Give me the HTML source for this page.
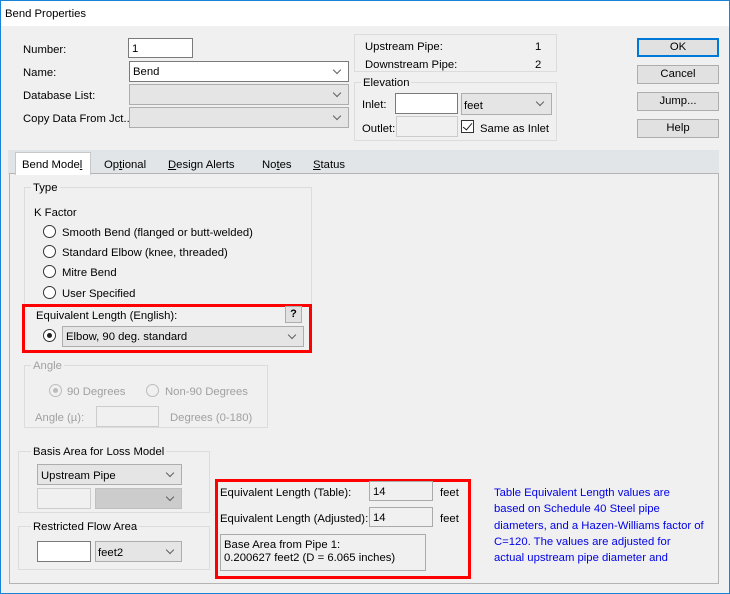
<!DOCTYPE html><html><head><style>
*{box-sizing:border-box}
body{margin:0;width:730px;height:594px;overflow:hidden;font-family:"Liberation Sans",sans-serif;font-size:11.3px;color:#000;background:#f0f0f0;position:relative}
.a{position:absolute;white-space:nowrap}
.t{position:absolute;white-space:nowrap;line-height:14px;margin-top:1px}
.in{position:absolute;background:#fff;border:1px solid #7a7a7a}
.dis{position:absolute;background:#f0f0f0;border:1px solid #ccc}
.cb{position:absolute;background:#e5e5e5;border:1px solid #adadad}
.cbw{position:absolute;background:#fff;border:1px solid #7a7a7a}
.ch::after{content:"";position:absolute;right:8px;top:5px;width:5px;height:5px;border-right:1px solid #606060;border-bottom:1px solid #606060;transform:rotate(45deg)}
.grp{position:absolute;border:1px solid #dcdcdc}
.lg{position:absolute;background:#f0f0f0;padding:0 2px;line-height:14px}
.btn{position:absolute;background:#e1e1e1;border:1px solid #adadad;text-align:center;line-height:16px}
.rd{position:absolute;width:13px;height:13px;border:1px solid #333;border-radius:50%;background:#fff}
.gray{color:#a0a0a0}
</style></head><body>
<div class="a" style="left:0;top:0;width:730px;height:594px;border:1px solid #1883d7;border-top:none"></div>
<div class="a" style="left:1px;top:0;width:728px;height:26px;background:#fff"></div>
<div class="a" style="left:0;top:0;width:730px;height:1px;background:#1883d7"></div>
<div class="t" style="left:5px;top:6px">Bend Properties</div>

<div class="t" style="left:23px;top:42px">Number:</div>
<div class="in" style="left:128px;top:38px;width:65px;height:20px"></div><div class="t" style="left:132px;top:41px">1</div>
<div class="t" style="left:23px;top:65px">Name:</div>
<div class="cbw ch" style="left:129px;top:61px;width:220px;height:21px"></div><div class="t" style="left:133px;top:64px">Bend</div>
<div class="t" style="left:23px;top:88px">Database List:</div>
<div class="cb ch" style="left:129px;top:84px;width:220px;height:21px"></div>
<div class="t" style="left:23px;top:111px">Copy Data From Jct...</div>
<div class="cb ch" style="left:129px;top:107px;width:220px;height:21px"></div>

<div class="grp" style="left:354px;top:34px;width:203px;height:38px"></div>
<div class="t" style="left:365px;top:39px">Upstream Pipe:</div><div class="t" style="left:535px;top:39px">1</div>
<div class="t" style="left:365px;top:57px">Downstream Pipe:</div><div class="t" style="left:535px;top:57px">2</div>
<div class="grp" style="left:354px;top:82px;width:203px;height:59px"></div>
<div class="lg" style="left:361px;top:76px">Elevation</div>
<div class="t" style="left:362px;top:97px">Inlet:</div>
<div class="in" style="left:395px;top:93px;width:63px;height:21px"></div>
<div class="cb ch" style="left:461px;top:93px;width:91px;height:22px"></div><div class="t" style="left:464px;top:98px">feet</div>
<div class="t" style="left:362px;top:121px">Outlet:</div>
<div class="dis" style="left:396px;top:116px;width:62px;height:21px;background:#f0f0f0"></div>
<div class="a" style="left:461px;top:120px;width:13px;height:13px;border:1px solid #333;background:#fff"></div>
<div class="a" style="left:465px;top:121px;width:5px;height:9px;border-right:1px solid #222;border-bottom:1px solid #222;transform:rotate(40deg)"></div>
<div class="t" style="left:480px;top:121px">Same as Inlet</div>

<div class="btn" style="left:637px;top:38px;width:82px;height:19px;border:2px solid #0078d7;line-height:15px">OK</div>
<div class="btn" style="left:637px;top:65px;width:82px;height:19px">Cancel</div>
<div class="btn" style="left:637px;top:92px;width:82px;height:19px">Jump...</div>
<div class="btn" style="left:637px;top:119px;width:82px;height:19px">Help</div>

<div class="a" style="left:8px;top:150px;width:711px;height:24px;background:#e1e5e8"></div>
<div class="a" style="left:9px;top:173px;width:710px;height:411px;border:1px solid #b4b4b4;background:#f0f0f0"></div>
<div class="a" style="left:15px;top:152px;width:76px;height:23px;background:#fff;border:1px solid #c8c8c8;border-bottom:none"></div>
<div class="t" style="left:22px;top:157px">Bend Mode<u>l</u></div>
<div class="t" style="left:104px;top:157px">Op<u>t</u>ional</div>
<div class="t" style="left:168px;top:157px"><u>D</u>esign Alerts</div>
<div class="t" style="left:262px;top:157px">No<u>t</u>es</div>
<div class="t" style="left:313px;top:157px"><u>S</u>tatus</div>

<div class="grp" style="left:24px;top:187px;width:288px;height:130px"></div>
<div class="lg" style="left:31px;top:181px">Type</div>
<div class="t" style="left:34px;top:205px">K Factor</div>
<div class="rd" style="left:43px;top:225px"></div><div class="t" style="left:62px;top:225px">Smooth Bend (flanged or butt-welded)</div>
<div class="rd" style="left:43px;top:245px"></div><div class="t" style="left:62px;top:245px">Standard Elbow (knee, threaded)</div>
<div class="rd" style="left:43px;top:265px"></div><div class="t" style="left:62px;top:265px">Mitre Bend</div>
<div class="rd" style="left:43px;top:286px"></div><div class="t" style="left:62px;top:286px">User Specified</div>

<div class="a" style="left:22px;top:304px;width:290px;height:49px;border:3px solid #f00;background:#f0f0f0"></div>
<div class="t" style="left:36px;top:308px">Equivalent Length (English):</div>
<div class="btn" style="left:285px;top:306px;width:17px;height:17px;font-weight:bold;font-size:11px;line-height:14px">?</div>
<div class="rd" style="left:43px;top:329px"></div><div class="a" style="left:47px;top:333px;width:5px;height:5px;border-radius:50%;background:#222"></div>
<div class="cb ch" style="left:62px;top:326px;width:242px;height:21px"></div><div class="t" style="left:66px;top:329px">Elbow, 90 deg. standard</div>

<div class="grp" style="left:24px;top:365px;width:244px;height:63px"></div>
<div class="lg gray" style="left:31px;top:359px">Angle</div>
<div class="rd" style="left:49px;top:384px;border-color:#bcbcbc;background:#f0f0f0"></div><div class="a" style="left:53px;top:388px;width:5px;height:5px;border-radius:50%;background:#bcbcbc"></div>
<div class="t gray" style="left:67px;top:384px">90 Degrees</div>
<div class="rd" style="left:146px;top:384px;border-color:#bcbcbc;background:#f0f0f0"></div>
<div class="t gray" style="left:165px;top:384px">Non-90 Degrees</div>
<div class="t gray" style="left:35px;top:410px">Angle (µ):</div>
<div class="dis" style="left:96px;top:406px;width:63px;height:21px"></div>
<div class="t gray" style="left:170px;top:410px">Degrees (0-180)</div>

<div class="grp" style="left:18px;top:451px;width:192px;height:62px"></div>
<div class="lg" style="left:31px;top:445px">Basis Area for Loss Model</div>
<div class="cb ch" style="left:37px;top:464px;width:145px;height:21px"></div><div class="t" style="left:41px;top:468px">Upstream Pipe</div>
<div class="dis" style="left:37px;top:488px;width:54px;height:21px;background:#f0f0f0"></div>
<div class="cb ch" style="left:95px;top:488px;width:87px;height:21px;background:#cccccc;border-color:#c0c0c0"></div>

<div class="grp" style="left:18px;top:526px;width:192px;height:44px"></div>
<div class="lg" style="left:31px;top:520px">Restricted Flow Area</div>
<div class="in" style="left:37px;top:541px;width:54px;height:21px"></div>
<div class="cb ch" style="left:95px;top:541px;width:87px;height:21px"></div><div class="t" style="left:98px;top:545px">feet2</div>

<div class="a" style="left:215px;top:479px;width:256px;height:100px;border:3px solid #f00"></div>
<div class="t" style="left:220px;top:485px">Equivalent Length (Table):</div>
<div class="dis" style="left:369px;top:481px;width:64px;height:20px;border-color:#aaa"></div><div class="t" style="left:373px;top:484px">14</div>
<div class="t" style="left:440px;top:485px">feet</div>
<div class="t" style="left:220px;top:511px">Equivalent Length (Adjusted):</div>
<div class="dis" style="left:369px;top:507px;width:64px;height:20px;border-color:#aaa"></div><div class="t" style="left:373px;top:510px">14</div>
<div class="t" style="left:440px;top:511px">feet</div>
<div class="dis" style="left:220px;top:534px;width:206px;height:37px;border-color:#aaa"></div>
<div class="t" style="left:224px;top:537px">Base Area from Pipe 1:</div>
<div class="t" style="left:224px;top:550px">0.200627 feet2 (D = 6.065 inches)</div>

<div class="a" style="left:494px;top:485px;color:#0000e6;line-height:16.3px">Table Equivalent Length values are<br>based on Schedule 40 Steel pipe<br>diameters, and a Hazen-Williams factor of<br>C=120. The values are adjusted for<br>actual upstream pipe diameter and</div>
</body></html>
